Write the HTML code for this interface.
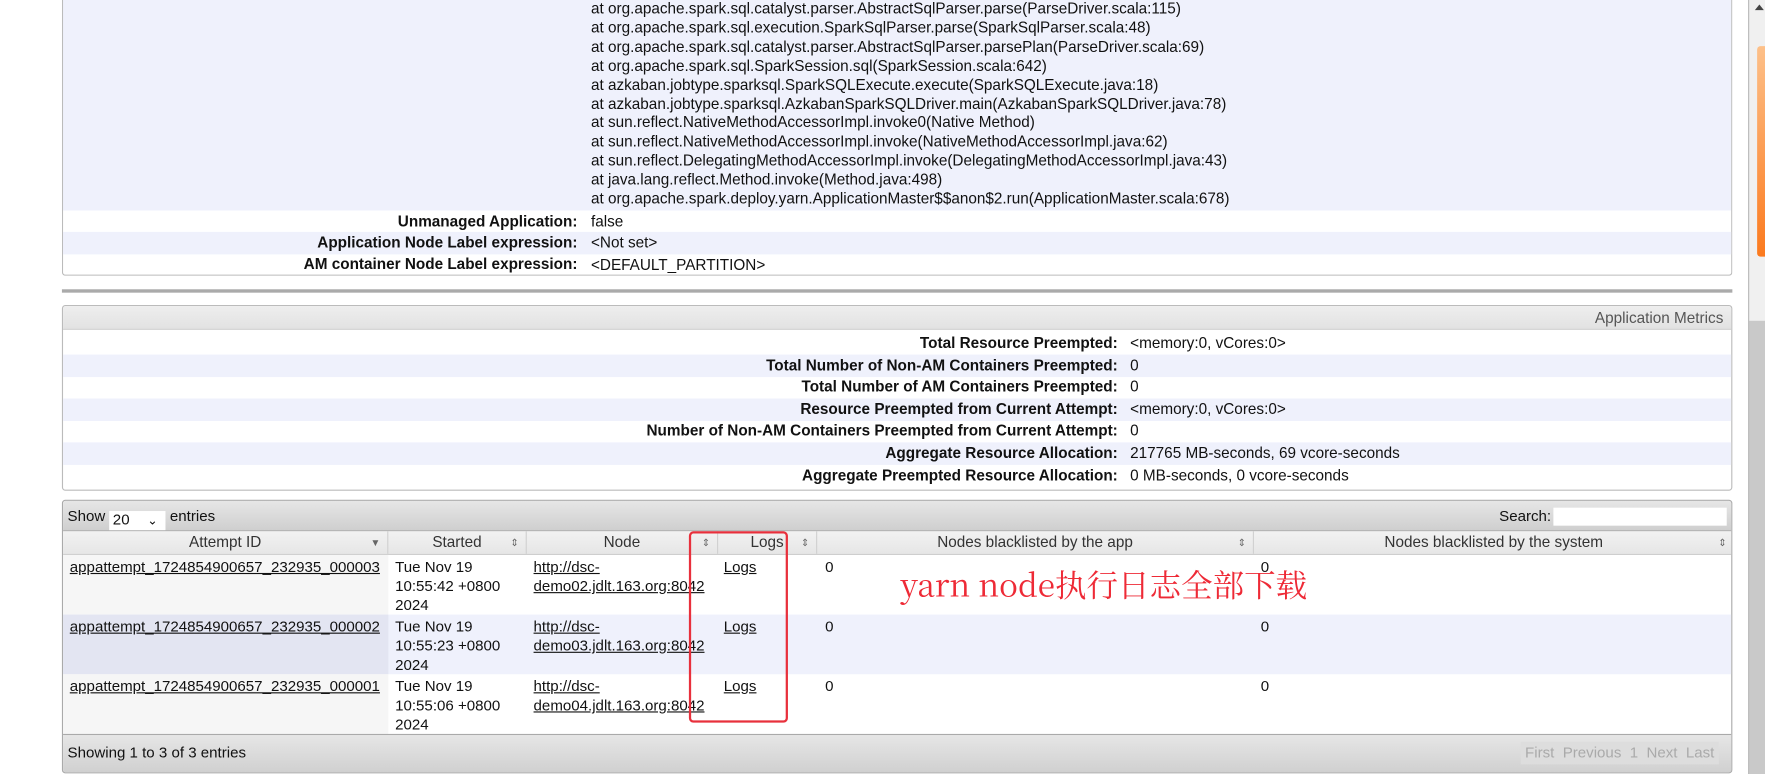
<!DOCTYPE html>
<html><head><meta charset="utf-8"><style>
*{box-sizing:border-box;margin:0;padding:0}
html,body{width:1765px;height:774px;overflow:hidden;background:#fff}
#s{position:absolute;left:0;top:0;width:1568px;height:688px;transform:scale(1.12564);transform-origin:0 0;font-family:"Liberation Sans",Arial,sans-serif;font-size:13.6px;color:#111}
.a{position:absolute}
.lav{background:#eff1fc}
.lbl{position:absolute;right:0;text-align:right;font-weight:bold;white-space:nowrap}
.val{position:absolute;white-space:nowrap}
.grad{background:linear-gradient(#e6e6e6,#cfcfcf)}
.th{position:absolute;top:0;height:20px;line-height:20px;text-align:center;color:#333;border-right:1px solid #d0d0d0;font-size:13.6px}
.th .ic{position:absolute;right:6px;top:0;font-size:9px;color:#666}
u{text-decoration:underline}
</style></head><body><div id="s">
<div class="a lav" style="left:55px;top:0;width:1483px;height:187px"></div>
<div class="a" style="left:55px;top:0;width:1484px;height:245px;border:1px solid #bbb;border-top:none;border-radius:0 0 3px 3px"></div>
<div class="a" style="left:525px;top:0;line-height:16.9px;white-space:nowrap">
at org.apache.spark.sql.catalyst.parser.AbstractSqlParser.parse(ParseDriver.scala:115)<br>
at org.apache.spark.sql.execution.SparkSqlParser.parse(SparkSqlParser.scala:48)<br>
at org.apache.spark.sql.catalyst.parser.AbstractSqlParser.parsePlan(ParseDriver.scala:69)<br>
at org.apache.spark.sql.SparkSession.sql(SparkSession.scala:642)<br>
at azkaban.jobtype.sparksql.SparkSQLExecute.execute(SparkSQLExecute.java:18)<br>
at azkaban.jobtype.sparksql.AzkabanSparkSQLDriver.main(AzkabanSparkSQLDriver.java:78)<br>
at sun.reflect.NativeMethodAccessorImpl.invoke0(Native Method)<br>
at sun.reflect.NativeMethodAccessorImpl.invoke(NativeMethodAccessorImpl.java:62)<br>
at sun.reflect.DelegatingMethodAccessorImpl.invoke(DelegatingMethodAccessorImpl.java:43)<br>
at java.lang.reflect.Method.invoke(Method.java:498)<br>
at org.apache.spark.deploy.yarn.ApplicationMaster$$anon$2.run(ApplicationMaster.scala:678)</div>
<div class="a lav" style="left:56px;top:206px;width:1482px;height:20px"></div>
<div class="a" style="left:0;top:187px;width:513px;height:60px;line-height:19.3px">
<div class="lbl" style="top:0">Unmanaged Application:</div>
<div class="lbl" style="top:19px">Application Node Label expression:</div>
<div class="lbl" style="top:38px">AM container Node Label expression:</div></div>
<div class="a" style="left:525px;top:187px;line-height:19.3px">false<br>&lt;Not set&gt;<br>&lt;DEFAULT_PARTITION&gt;</div>
<div class="a" style="left:55px;top:257px;width:1484px;height:3px;background:#aaa"></div>
<div class="a" style="left:55px;top:271px;width:1484px;height:165px;border:1px solid #bbb;border-radius:3px;overflow:hidden">
<div class="grad" style="height:21px;background:linear-gradient(#eee,#e2e2e2);border-bottom:1px solid #ccc;text-align:right;padding-right:7px;line-height:21px;color:#555;font-size:13.6px">Application Metrics</div>
<div style="position:relative">
<div class="a lav" style="top:22px;left:0;width:100%;height:19.6px"></div>
<div class="a lav" style="top:61px;left:0;width:100%;height:19.6px"></div>
<div class="a lav" style="top:100px;left:0;width:100%;height:19.6px"></div>
<div class="a" style="left:0;top:2px;width:937px;line-height:19.6px">
<div class="lbl" style="top:0">Total Resource Preempted:</div>
<div class="lbl" style="top:19.6px">Total Number of Non-AM Containers Preempted:</div>
<div class="lbl" style="top:39.2px">Total Number of AM Containers Preempted:</div>
<div class="lbl" style="top:58.8px">Resource Preempted from Current Attempt:</div>
<div class="lbl" style="top:78.4px">Number of Non-AM Containers Preempted from Current Attempt:</div>
<div class="lbl" style="top:98px">Aggregate Resource Allocation:</div>
<div class="lbl" style="top:117.6px">Aggregate Preempted Resource Allocation:</div></div>
<div class="a" style="left:948px;top:2px;line-height:19.6px;white-space:nowrap">&lt;memory:0, vCores:0&gt;<br>0<br>0<br>&lt;memory:0, vCores:0&gt;<br>0<br>217765 MB-seconds, 69 vcore-seconds<br>0 MB-seconds, 0 vcore-seconds</div>
</div></div>
<div class="a" style="left:55px;top:444px;width:1484px;height:243px;border:1px solid #aaa;border-radius:3px;overflow:hidden;font-size:13.4px">
<div class="grad" style="position:absolute;left:0;top:0;width:100%;height:27px;border-bottom:1px solid #aaa">
<div class="a" style="left:4px;top:6px">Show <span style="display:inline-block;background:#fff;width:50px;height:17px;padding-left:3px;vertical-align:-3px">20 <span style="margin-left:12px;font-size:11px">&#8964;</span></span> entries</div>
<div class="a" style="left:1200px;top:6px;width:122px;text-align:right">Search:</div>
<div class="a" style="left:1324px;top:6px;width:154px;height:16px;background:#fff"></div></div>
<div class="a" style="left:0;top:27px;width:100%;height:21px;background:linear-gradient(#f2f2f2,#e6e6e6);border-bottom:1px solid #ccc">
<div class="th" style="left:0;width:289px">Attempt ID<span class="ic">▼</span></div>
<div class="th" style="left:289px;width:123px">Started<span class="ic">⇕</span></div>
<div class="th" style="left:412px;width:170px">Node<span class="ic">⇕</span></div>
<div class="th" style="left:582px;width:88px">Logs<span class="ic">⇕</span></div>
<div class="th" style="left:670px;width:388px">Nodes blacklisted by the app<span class="ic">⇕</span></div>
<div class="th" style="left:1058px;width:426px;border:none">Nodes blacklisted by the system<span class="ic">⇕</span></div></div>
<div class="a" style="left:0;top:48px;width:289px;height:53px;background:#f6f6f6"></div>
<div class="a lav" style="left:0;top:101px;width:100%;height:53px"></div>
<div class="a" style="left:0;top:101px;width:289px;height:53px;background:#e3e5f2"></div>
<div class="a" style="left:0;top:154px;width:289px;height:53px;background:#f6f6f6"></div>
<div class="a" style="left:0;top:48px;width:100%;line-height:17.2px">
<div style="position:relative;height:53px"><u class="a" style="left:6px;top:2px">appattempt_1724854900657_232935_000003</u><span class="a" style="left:295px;top:2px">Tue Nov 19<br>10:55:42 +0800<br>2024</span><u class="a" style="left:418px;top:2px">http://dsc-<br>demo02.jdlt.163.org:8042</u><u class="a" style="left:587px;top:2px">Logs</u><span class="a" style="left:677px;top:2px">0</span><span class="a" style="left:1064px;top:2px">0</span></div>
<div style="position:relative;height:53px"><u class="a" style="left:6px;top:2px">appattempt_1724854900657_232935_000002</u><span class="a" style="left:295px;top:2px">Tue Nov 19<br>10:55:23 +0800<br>2024</span><u class="a" style="left:418px;top:2px">http://dsc-<br>demo03.jdlt.163.org:8042</u><u class="a" style="left:587px;top:2px">Logs</u><span class="a" style="left:677px;top:2px">0</span><span class="a" style="left:1064px;top:2px">0</span></div>
<div style="position:relative;height:53px"><u class="a" style="left:6px;top:2px">appattempt_1724854900657_232935_000001</u><span class="a" style="left:295px;top:2px">Tue Nov 19<br>10:55:06 +0800<br>2024</span><u class="a" style="left:418px;top:2px">http://dsc-<br>demo04.jdlt.163.org:8042</u><u class="a" style="left:587px;top:2px">Logs</u><span class="a" style="left:677px;top:2px">0</span><span class="a" style="left:1064px;top:2px">0</span></div></div>
<div class="a grad" style="left:0;top:207px;width:100%;height:36px;border-top:1px solid #aaa">
<div class="a" style="left:4px;top:8px">Showing 1 to 3 of 3 entries</div>
<div class="a" style="right:11px;top:6px;height:20px;line-height:20px;color:#aaa;background:#ddd;white-space:nowrap;padding:0 4px">First &nbsp;Previous &nbsp;1 &nbsp;Next &nbsp;Last</div></div>
</div>
<div class="a" style="left:612px;top:472px;width:88px;height:170px;border:2.5px solid #e8303c;border-radius:4px"></div>
<div class="a" style="left:800px;top:501px;color:#ee2a36;font-family:'Noto Serif CJK SC',serif;font-size:28px;line-height:36px;white-space:nowrap">yarn node执行日志全部下载</div>
<div class="a" style="left:1553px;top:0;width:15px;height:688px;background:#c9c9c9;border-left:1px solid #bbb"></div>
<div class="a" style="left:1554px;top:0;width:14px;height:285px;background:#f0f0f0"></div>
<div class="a" style="left:1559px;top:4px;width:0;height:0;border-left:4px solid transparent;border-right:4px solid transparent;border-bottom:5px solid #444"></div>
<div class="a" style="left:1561px;top:41px;width:7px;height:187px;background:linear-gradient(#fdc089,#fb7a1e);border-radius:3px 0 0 3px"></div>
</div></body></html>
